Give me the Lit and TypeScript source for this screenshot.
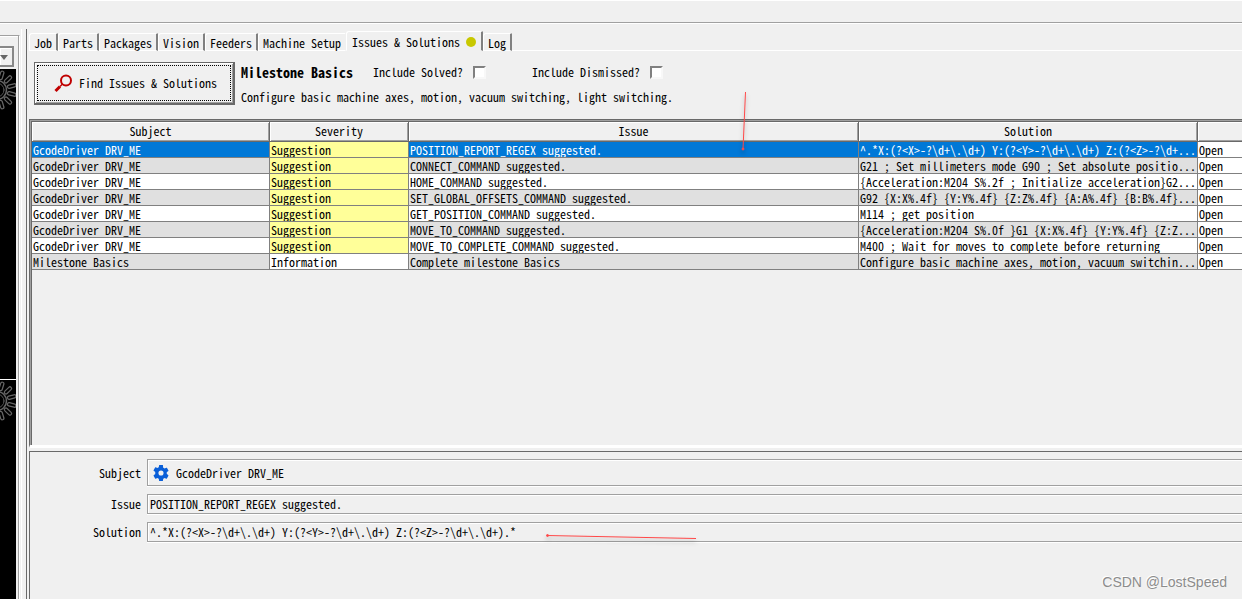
import { LitElement, html, svg, css } from "lit";
import { customElement, state } from "lit/decorators.js";
import { classMap } from "lit/directives/class-map.js";

interface Issue {
  subject: string;
  severity: string;
  issue: string;
  solution: string;
}

const driver = "GcodeDriver DRV_ME";

const issues: Issue[] = [
  { subject: driver, severity: "Suggestion", issue: "POSITION_REPORT_REGEX suggested.", solution: "^.*X:(?<X>-?\\d+\\.\\d+) Y:(?<Y>-?\\d+\\.\\d+) Z:(?<Z>-?\\d+..." },
  { subject: driver, severity: "Suggestion", issue: "CONNECT_COMMAND suggested.", solution: "G21 ; Set millimeters mode G90 ; Set absolute positio..." },
  { subject: driver, severity: "Suggestion", issue: "HOME_COMMAND suggested.", solution: "{Acceleration:M204 S%.2f ; Initialize acceleration}G2..." },
  { subject: driver, severity: "Suggestion", issue: "SET_GLOBAL_OFFSETS_COMMAND suggested.", solution: "G92 {X:X%.4f} {Y:Y%.4f} {Z:Z%.4f} {A:A%.4f} {B:B%.4f}..." },
  { subject: driver, severity: "Suggestion", issue: "GET_POSITION_COMMAND suggested.", solution: "M114 ; get position" },
  { subject: driver, severity: "Suggestion", issue: "MOVE_TO_COMMAND suggested.", solution: "{Acceleration:M204 S%.0f }G1 {X:X%.4f} {Y:Y%.4f} {Z:Z..." },
  { subject: driver, severity: "Suggestion", issue: "MOVE_TO_COMPLETE_COMMAND suggested.", solution: "M400 ; Wait for moves to complete before returning" },
  { subject: "Milestone Basics", severity: "Information", issue: "Complete milestone Basics", solution: "Configure basic machine axes, motion, vacuum switchin..." },
];

const tabs = ["Job", "Parts", "Packages", "Vision", "Feeders", "Machine Setup", "Issues & Solutions", "Log"];

@customElement("camera-strip")
class CameraStrip extends LitElement {
  static styles = css`
    :host { display: flex; flex-direction: column; flex: none; width: 26px; padding-top: 11px; box-sizing: border-box; }
    .frame { flex: 1; width: 20px; box-sizing: border-box; border-top: 1px solid #a0a0a0; border-right: 1px solid #fff; box-shadow: inset -1px 0 #a0a0a0, inset 0 1px #fff; padding-top: 10px; display: flex; flex-direction: column; }
    .picker { position: relative; width: 14px; height: 21px; overflow: hidden; margin-bottom: 2px; }
    select { appearance: none; display: block; width: 14px; height: 21px; margin: 0; padding: 0; border: 2px solid #888; border-left: 0; border-radius: 0; background: #f0f0f0; box-shadow: inset 1px 1px #fff; }
    .arrow { position: absolute; left: 0; top: 9px; border: 4px solid transparent; border-top: 5px solid #666; border-bottom: 0; pointer-events: none; }
    .view { width: 16px; background: #000; }
    .first { height: 310px; border-bottom: 1px solid #fff; }
    .second { flex: 1; }
    svg { display: block; }
  `;

  private gear() {
    const angles = [-73, -44, -15, 15, 44, 73];
    const spokes = angles.map((a) => svg`<path d="M12.500 0H18" transform="rotate(${a})"/>`);
    return html`<svg width="16" height="44" viewBox="0 0 16 44" fill="none" stroke-linecap="round">
      <g transform="translate(-3 21)">
        <g stroke="#666" stroke-width="4.500">${spokes}</g>
        <g stroke="#000" stroke-width="2">${spokes}</g>
        <circle r="9.500" fill="#000" stroke="#666" stroke-width="1.500"/>
        <circle r="7" stroke="#555" stroke-width="1"/>
      </g>
    </svg>`;
  }

  render() {
    return html`<div class="frame">
      <div class="picker"><select aria-label="Camera"></select><span class="arrow"></span></div>
      <div class="view first">${this.gear()}</div>
      <div class="view second">${this.gear()}</div>
    </div>`;
  }
}

@customElement("issue-table")
class IssueTable extends LitElement {
  @state() private selected = 0;

  static styles = css`
    :host { display: block; flex: none; height: 329px; box-sizing: border-box; border-left: 1px solid #696969; border-top: 1px solid #696969; border-bottom: 3px solid #fff; }
    .well { height: 100%; box-sizing: border-box; border-left: 1px solid #a0a0a0; border-top: 1px solid #a0a0a0; box-shadow: inset 1px 1px #696969; padding: 1px 0 0 1px; overflow: hidden; }
    table { border-collapse: separate; border-spacing: 0; table-layout: fixed; width: 100%; }
    .subject { width: 238px; }
    .severity { width: 139px; }
    .solution { width: 339px; }
    .state { width: 44px; }
    th { height: 20px; line-height: 18px; padding: 0 0 1px; box-sizing: border-box; font-weight: normal; border-right: 1px solid #696969; border-bottom: 1px solid #696969; box-shadow: inset 1px 1px #fff, inset -1px -1px #a0a0a0; }
    td { height: 16px; line-height: 15px; padding: 0 0 0 1px; box-sizing: border-box; white-space: pre; overflow: hidden; background: #fff; border-right: 1px solid #808080; border-bottom: 1px solid #808080; }
    th:last-child, td:last-child { border-right: 0; }
    th:last-child { box-shadow: inset 1px 1px #fff, inset 0 -1px #a0a0a0; }
    tr:nth-child(even) td { background: #e0e0e0; }
    tbody tr td.plain { background: #fff; }
    tbody tr td.warn { background: #ffff99; }
    tbody tr.selected td.main { background: #0078d7; color: #fff; }
  `;

  render() {
    return html`<div class="well"><table>
      <colgroup><col class="subject"><col class="severity"><col><col class="solution"><col class="state"></colgroup>
      <thead><tr><th>Subject</th><th>Severity</th><th>Issue</th><th>Solution</th><th></th></tr></thead>
      <tbody>${issues.map((row, i) => html`
        <tr class=${classMap({ selected: i === this.selected })} @click=${() => (this.selected = i)}>
          <td class="main">${row.subject}</td>
          <td class=${row.severity === "Suggestion" ? "warn" : "plain"}>${row.severity}</td>
          <td class="main">${row.issue}</td>
          <td class="main">${row.solution}</td>
          <td class="plain">Open</td>
        </tr>`)}</tbody>
    </table></div>`;
  }
}

@customElement("issue-details")
class IssueDetails extends LitElement {
  static styles = css`
    :host { display: block; flex: 1; margin-top: 3px; border-left: 1px solid #696969; border-top: 1px solid #696969; }
    .form { display: grid; grid-template-columns: 111px 1fr; column-gap: 6px; row-gap: 8px; align-items: center; padding-top: 7px; }
    label { text-align: right; line-height: 18px; }
    .field { display: flex; align-items: center; height: 20px; box-sizing: border-box; border: 1px solid #a0a0a0; border-right: 0; box-shadow: inset 1px 1px #fff, 0 1px #fff; padding-left: 2px; }
    .tall { height: 27px; padding-left: 5px; gap: 7px; }
    input { flex: 1; min-width: 0; height: 16px; border: 0; padding: 0; background: transparent; color: #000; font: inherit; font-feature-settings: inherit; outline: none; }
    svg { flex: none; }
  `;

  render() {
    return html`<div class="form">
      <label for="subject">Subject</label>
      <div class="field tall">
        <svg width="16" height="16" viewBox="2 2 20 20" fill="#0a5fd8"><path d="M19.140 12.940c.04-.3.06-.61.06-.94s-.02-.64-.07-.94l2.030-1.580a.49.49 0 0 0 .12-.61l-1.920-3.320a.49.49 0 0 0-.59-.22l-2.390.96a7 7 0 0 0-1.620-.94l-.36-2.540A.48.48 0 0 0 13.920 2h-3.840a.48.48 0 0 0-.48.410l-.36 2.540c-.59.24-1.130.57-1.620.94l-2.390-.96a.48.48 0 0 0-.59.22L2.720 8.470a.48.48 0 0 0 .12.610l2.030 1.580a7.500 7.500 0 0 0 0 2.680l-2.030 1.580a.49.49 0 0 0-.12.610l1.920 3.320c.12.22.37.29.59.22l2.390-.96c.5.38 1.030.7 1.620.94l.36 2.540c.05.24.24.41.48.41h3.840c.24 0 .44-.17.47-.41l.36-2.540c.59-.24 1.130-.56 1.620-.94l2.390.96c.22.08.47 0 .59-.22l1.920-3.320a.48.48 0 0 0-.12-.610zM12 15.200A3.200 3.200 0 1 1 12 8.800a3.200 3.200 0 0 1 0 6.400z"/></svg>
        <input id="subject" readonly .value=${driver}>
      </div>
      <label for="issue">Issue</label>
      <div class="field"><input id="issue" readonly .value=${"POSITION_REPORT_REGEX suggested."}></div>
      <label for="solution">Solution</label>
      <div class="field"><input id="solution" readonly .value=${"^.*X:(?<X>-?\\d+\\.\\d+) Y:(?<Y>-?\\d+\\.\\d+) Z:(?<Z>-?\\d+\\.\\d+).*"}></div>
    </div>`;
  }
}

@customElement("app-root")
class AppRoot extends LitElement {
  @state() private active = "Issues & Solutions";

  static styles = css`
    :host { display: flex; flex-direction: column; position: relative; min-height: 100vh; overflow: hidden; background: #f0f0f0; color: #000; font-family: "Noto Sans CJK SC", "Liberation Mono", monospace; font-size: 12px; font-feature-settings: "hwid", "liga" 0; line-height: 18px; }
    .toolbar { height: 24px; box-sizing: border-box; border-top: 1px solid #fff; border-bottom: 1px solid #fff; box-shadow: inset 0 -1px #a0a0a0; }
    .body { flex: 1; display: flex; }
    .main { flex: 1; min-width: 0; display: flex; flex-direction: column; margin-top: 5px; border-left: 1px solid #696969; padding-left: 2px; box-shadow: -4px 0 #f0f0f0, -5px 0 #fff; }
    .tabs { display: flex; align-items: flex-end; height: 22px; }
    .tab { font: inherit; font-feature-settings: inherit; color: inherit; background: transparent; margin: 0; height: 18px; line-height: 18px; padding: 0 4px; white-space: nowrap; box-sizing: border-box; border: 0; border-left: 1px solid #fff; border-top: 1px solid #fff; border-right: 2px solid #808080; border-bottom: 1px solid #fff; border-radius: 3px 1px 0 0; }
    .before { border-right-color: #f0f0f0; border-right-width: 1px; }
    .active { height: 20px; display: flex; align-items: center; gap: 6px; padding: 2px 5px 0; border-bottom-color: #f0f0f0; }
    .dot { width: 10px; height: 10px; border-radius: 50%; background: #c8c800; }
    .rule { flex: 1; height: 1px; background: #fff; }
    .header { display: flex; gap: 6px; padding: 11px 0 0 5px; height: 68px; box-sizing: border-box; }
    .find { font: inherit; font-feature-settings: inherit; color: inherit; width: 201px; height: 43px; padding: 2px; border: 1px solid #696969; border-right-width: 2px; border-bottom-width: 2px; background: #f0f0f0; box-shadow: inset 1px 1px #fff, inset -1px -1px #a0a0a0; }
    .focus { display: flex; align-items: center; gap: 6px; height: 100%; box-sizing: border-box; border: 1px dotted #000; padding-left: 16px; }
    .info { display: flex; flex-direction: column; gap: 7px; padding-top: 1px; }
    .filters { display: flex; align-items: center; height: 18px; }
    h1 { margin: 0; font-size: 14px; line-height: 18px; font-weight: bold; width: 132px; }
    .check { display: flex; align-items: center; gap: 10px; margin-right: 46px; }
    .check input { appearance: none; margin: 0; width: 13px; height: 13px; background: #fff; border: 2px solid; border-color: #808080 #f8f8f8 #f8f8f8 #808080; }
    .mark { position: absolute; left: 0; top: 0; pointer-events: none; filter: drop-shadow(0 3px 2px rgba(0, 0, 0, 0.3)); }
    .watermark { position: absolute; right: 15px; bottom: 8px; font: 14px/18px "Liberation Sans", sans-serif; color: #8c8c8c; text-shadow: -1px -1px #fff; }
  `;

  private tab(name: string) {
    const active = name === this.active;
    const before = tabs[tabs.indexOf(name) + 1] === this.active;
    return html`<button role="tab" aria-selected=${active} class=${classMap({ tab: true, active, before })}
      @click=${() => (this.active = name)}>${name}${active ? html`<span class="dot"></span>` : ""}</button>`;
  }

  render() {
    return html`
      <div class="toolbar"></div>
      <div class="body">
        <camera-strip></camera-strip>
        <div class="main">
          <div class="tabs" role="tablist">${tabs.map((t) => this.tab(t))}<span class="rule"></span></div>
          <div class="header">
            <button class="find"><span class="focus">
              <svg width="19" height="19" viewBox="0 0 19 19" fill="none" stroke="#c00000"><circle cx="12" cy="6.500" r="5" stroke-width="2"/><path d="M1.500 17L6 12.500" stroke-width="3"/><path d="M6 12.500L8.500 10" stroke-width="1.500"/></svg>
              Find Issues &amp; Solutions</span></button>
            <div class="info">
              <div class="filters">
                <h1>Milestone Basics</h1>
                <label class="check">Include Solved?<input type="checkbox"></label>
                <label class="check">Include Dismissed?<input type="checkbox"></label>
              </div>
              <div>Configure basic machine axes, motion, vacuum switching, light switching.</div>
            </div>
          </div>
          <issue-table></issue-table>
          <issue-details></issue-details>
        </div>
      </div>
      <svg class="mark" width="760" height="560" viewBox="0 0 760 560" stroke="#ff4848" stroke-width="1" fill="#ff4848">
        <path d="M745.500 92L743 149"/><circle cx="743" cy="149" r="1"/>
        <path d="M547 535.500L696 538.500"/><circle cx="547.500" cy="535.500" r="1"/>
      </svg>
      <div class="watermark">CSDN @LostSpeed</div>`;
  }
}
